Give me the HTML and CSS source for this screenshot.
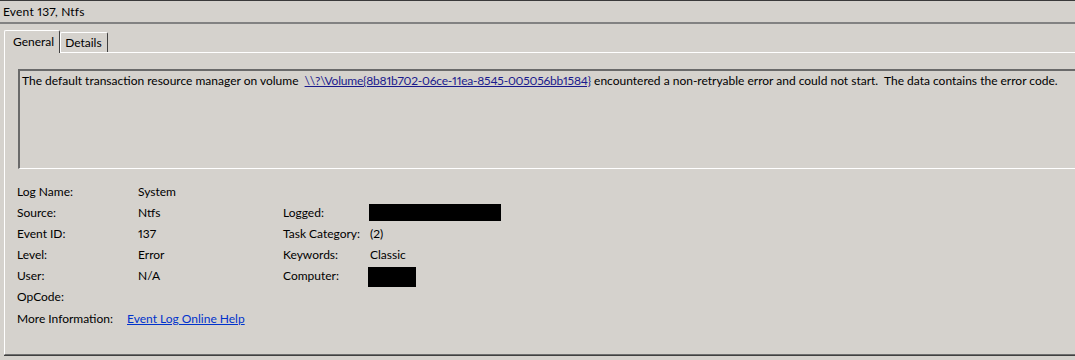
FILE: index.html
```html
<!DOCTYPE html>
<html>
<head>
<meta charset="utf-8">
<link rel="stylesheet" href="styles.css">
</head>
<body>
<div class="window">
  <div class="topline"></div>
  <div class="titlebar">Event 137, Ntfs</div>
  <div class="sep"></div>
  <div class="tabs">
    <div class="tab active">General</div>
    <div class="tab">Details</div>
  </div>
  <div class="panel">
    <div class="desc">The default transaction resource manager on volume <a class="vlink" href="#">\\?\Volume{8b81b702-06ce-11ea-8545-005056bb1584}</a> encountered a non-retryable error and could not start.&nbsp; The data contains the error code.</div>
    <div class="props">
      <div class="lbl">Log Name:</div><div class="val">System</div><div></div><div></div>
      <div class="lbl">Source:</div><div class="val">Ntfs</div><div class="lbl2">Logged:</div><div class="val2"><span class="redact r1"></span></div>
      <div class="lbl">Event ID:</div><div class="val">137</div><div class="lbl2">Task Category:</div><div class="val2">(2)</div>
      <div class="lbl">Level:</div><div class="val">Error</div><div class="lbl2">Keywords:</div><div class="val2">Classic</div>
      <div class="lbl">User:</div><div class="val">N/A</div><div class="lbl2">Computer:</div><div class="val2"><span class="redact r2"></span></div>
      <div class="lbl">OpCode:</div><div class="val"></div><div></div><div></div>
    </div>
    <div class="more">
      <span class="lbl">More Information:</span>
      <a class="help" href="#">Event Log Online Help</a>
    </div>
  </div>
</div>
</body>
</html>
```
FILE: styles.css
```css
html, body {
  margin: 0;
  padding: 0;
  background: #d5d2cd;
}
body {
  width: 1075px;
  height: 360px;
  overflow: hidden;
  font-family: "Lato", "Liberation Sans", sans-serif;
  font-size: 12px;
  font-variant-numeric: proportional-nums;
  color: #000;
}
.window {
  width: 1075px;
}
.topline {
  height: 1px;
  background: #3a3a3a;
}
.titlebar {
  height: 21px;
  line-height: 21px;
  padding-left: 3px;
  letter-spacing: 0.2px;
}
.sep {
  height: 2px;
  background: #828282;
}
.tabs {
  display: flex;
  align-items: flex-end;
  height: 28px;
  padding-left: 4px;
}
.tab {
  position: relative;
  height: 19px;
  line-height: 19px;
  padding: 0 5px 0 4px;
  border-top: 1px solid #fff;
  border-left: 1px solid #fff;
  border-right: 1px solid #404040;
  border-radius: 2px 2px 0 0;
}
.tab.active {
  height: 22px;
  line-height: 21px;
  padding: 0 5px 0 8px;
  margin-bottom: -1px;
  background: #d5d2cd;
  z-index: 1;
}
.panel {
  margin-left: 4px;
  width: 1100px;
  height: 285px;
  border-top: 1px solid #fff;
  border-left: 1px solid #fff;
  border-bottom: 1px solid #6e6e6e;
  box-shadow: 0 1px 0 #404040;
  padding-top: 16px;
}
.desc {
  margin-left: 13px;
  height: 95px;
  padding: 2px 0 0 2px;
  border-top: 2px solid #6a6a6a;
  border-left: 2px solid #6a6a6a;
  border-bottom: 1px solid #fff;
  line-height: 16px;
  white-space: nowrap;
}
.vlink {
  color: #1a1a8c;
  text-decoration: underline;
  letter-spacing: -0.22px;
  margin-left: 3px;
}
.props {
  margin-top: 12px;
  margin-left: 12px;
  display: grid;
  grid-template-columns: 121px 145px 87px auto;
  grid-auto-rows: 21px;
  line-height: 21px;
}
.val2 {
  display: flex;
  align-items: center;
}
.redact {
  display: block;
  background: #000;
}
.r1 {
  width: 132px;
  height: 17px;
  margin-left: -1px;
}
.r2 {
  width: 48px;
  height: 20px;
  margin-left: -2px;
  margin-top: 3px;
}
.more {
  margin-left: 12px;
  margin-top: 1px;
  display: flex;
  gap: 14px;
  line-height: 21px;
}
.help {
  color: #0033cc;
  text-decoration: underline;
}
```
